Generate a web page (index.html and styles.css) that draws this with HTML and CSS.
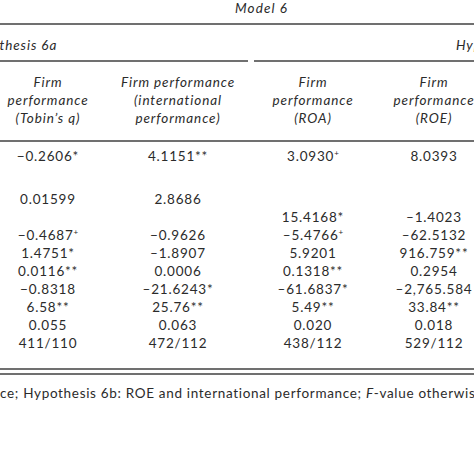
FILE: index.html
```html
<!DOCTYPE html>
<html lang="en">
<head>
<meta charset="utf-8">
<title>Model 6</title>
<link rel="stylesheet" href="styles.css">
</head>
<body>
<div class="page">
  <div class="sheet">
    <div class="model">Model 6</div>
    <div class="rule"></div>
    <div class="hyp-row">
      <span class="hyp-a">Hypothesis 6a</span>
      <span class="hyp-b">Hypothesis 6b</span>
    </div>
    <div class="split-rule">
      <div class="seg seg-a"></div>
      <div class="seg seg-b"></div>
    </div>
    <div class="grid head">
      <div class="cell">Firm<br>performance<br>(Tobin’s <i>q</i>)</div>
      <div class="cell">Firm performance<br>(international<br>performance)</div>
      <div class="cell">Firm<br>performance<br>(ROA)</div>
      <div class="cell">Firm<br>performance<br>(ROE)</div>
    </div>
    <div class="rule"></div>
    <div class="grid body first">
      <div class="cell">−0.2606*</div><div class="cell">4.1151**</div><div class="cell">3.0930<sup>+</sup></div><div class="cell">8.0393</div>
    </div>
    <div class="grid body rest">
      <div class="cell">0.01599</div><div class="cell">2.8686</div><div class="cell"></div><div class="cell"></div>
      <div class="cell"></div><div class="cell"></div><div class="cell">15.4168*</div><div class="cell">–1.4023</div>
      <div class="cell">−0.4687<sup>+</sup></div><div class="cell">−0.9626</div><div class="cell">–5.4766<sup>+</sup></div><div class="cell">–62.5132</div>
      <div class="cell">1.4751*</div><div class="cell">–1.8907</div><div class="cell">5.9201</div><div class="cell">916.759**</div>
      <div class="cell">0.0116**</div><div class="cell">0.0006</div><div class="cell">0.1318**</div><div class="cell">0.2954</div>
      <div class="cell">−0.8318</div><div class="cell">–21.6243*</div><div class="cell">–61.6837*</div><div class="cell">–2,765.584</div>
      <div class="cell">6.58**</div><div class="cell">25.76**</div><div class="cell">5.49**</div><div class="cell">33.84**</div>
      <div class="cell">0.055</div><div class="cell">0.063</div><div class="cell">0.020</div><div class="cell">0.018</div>
      <div class="cell">411/110</div><div class="cell">472/112</div><div class="cell">438/112</div><div class="cell">529/112</div>
    </div>
    <div class="double-rule"></div>
    <div class="foot">
      <span class="foot-pre">Hypothesis 6a: Tobin’s q and international performan</span><span class="foot-main">ce; Hypothesis 6b: ROE and international performance; <i>F</i>-value otherwise</span>
    </div>
  </div>
</div>
</body>
</html>
```
FILE: styles.css
```css
html, body {
  margin: 0;
  padding: 0;
  background: #fff;
}

.page {
  width: 474px;
  height: 474px;
  overflow: hidden;
  background: #fff;
  color: #2b2b2b;
  font-family: Lato, "Open Sans", "Liberation Sans", sans-serif;
  font-size: 13.5px;
}

.sheet {
  width: 474px;
}

.model {
  height: 23px;
  line-height: 16px;
  padding-left: 235px;
  font-style: italic;
  letter-spacing: 1.1px;
  white-space: nowrap;
}

.rule {
  height: 2px;
  background: #707070;
}

.hyp-row {
  height: 35px;
  display: grid;
  grid-template-columns: 456px 1fr;
  font-style: italic;
  letter-spacing: 0.9px;
  white-space: nowrap;
  line-height: 16px;
}

.hyp-a {
  margin-top: 12px;
  margin-left: -34px;
}

.hyp-b {
  margin-top: 12px;
}

.split-rule {
  display: flex;
  gap: 6px;
}

.seg {
  height: 2px;
  background: #707070;
}

.seg-a {
  width: 248px;
  flex: none;
}

.seg-b {
  flex: 1;
}

.grid {
  display: grid;
  grid-template-columns: 130px 130px 140px 102px;
  margin-left: -17px;
  width: 502px;
}

.cell {
  text-align: center;
  white-space: nowrap;
}

.head {
  height: 78px;
  padding-top: 11px;
  box-sizing: border-box;
  font-style: italic;
  letter-spacing: 0.9px;
  line-height: 18px;
}

.body {
  line-height: 18px;
  grid-auto-rows: 18px;
  letter-spacing: 0.8px;
}

.first {
  padding-top: 5px;
}

.rest {
  margin-top: 25px;
}

.body sup {
  font-size: 8px;
  line-height: 0;
  letter-spacing: 0;
  vertical-align: 5px;
}

.double-rule {
  margin-top: 16px;
  height: 1.5px;
  background: #707070;
}

.double-rule::after {
  content: "";
  display: block;
  height: 1.5px;
  transform: translateY(5px);
  background: #707070;
}

.foot {
  display: flex;
  margin-top: 15px;
  line-height: 16px;
  letter-spacing: 0.68px;
  white-space: nowrap;
}

.foot-pre {
  width: 0;
  display: flex;
  justify-content: flex-end;
}

.foot-main i {
  font-style: italic;
}
```
